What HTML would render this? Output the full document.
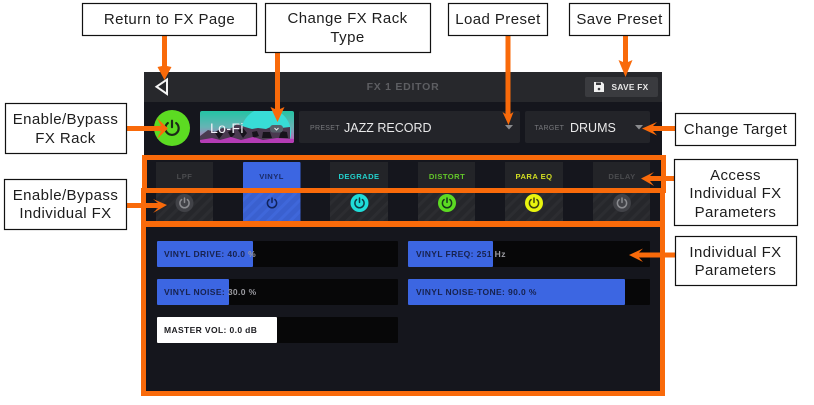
<!DOCTYPE html>
<html>
<head>
<meta charset="utf-8">
<style>
html,body{margin:0;padding:0;width:814px;height:405px;background:#fff;overflow:hidden}
svg{display:block}
.l{font-family:"Liberation Sans",sans-serif;font-size:15px;fill:#1d1d1d;text-anchor:middle;letter-spacing:.42px}
.u{font-family:"Liberation Sans",sans-serif}
.b{fill:#fff;stroke:#111;stroke-width:1.2}
.o{fill:#f96a0a}
.s{font-family:"Liberation Sans",sans-serif;font-size:8.5px;letter-spacing:.38px;font-weight:700}
.tab{font-family:"Liberation Sans",sans-serif;font-size:7.6px;letter-spacing:.45px;text-anchor:middle;font-weight:700}
</style>
</head>
<body>
<svg width="814" height="405" viewBox="0 0 814 405" xmlns="http://www.w3.org/2000/svg">
<defs>
<pattern id="h" width="8" height="8" patternUnits="userSpaceOnUse" patternTransform="rotate(45)">
<rect width="8" height="8" fill="#26272b"/><rect width="3" height="8" fill="#2c2d31"/>
</pattern>
<pattern id="hb" width="8" height="8" patternUnits="userSpaceOnUse" patternTransform="rotate(45)">
<rect width="8" height="8" fill="#3a60cf"/><rect width="3" height="8" fill="#3f67da"/>
</pattern>
<linearGradient id="sky" x1="0" y1="0" x2="0" y2="1">
<stop offset="0" stop-color="#24c4a4"/><stop offset=".5" stop-color="#66b4b4"/><stop offset=".8" stop-color="#a87cb8"/><stop offset="1" stop-color="#c05cc0"/>
</linearGradient>
<clipPath id="lf"><rect x="200" y="111" width="94" height="32" rx="2"/></clipPath>
<g id="pw" fill="none" stroke-linecap="round">
<path d="M-2.9-3.4A4.6 4.6 0 1 0 2.9-3.4" stroke-width="1.5"/>
<path d="M0-5V-.6" stroke-width="1.5"/>
</g>
</defs>

<!-- panel -->
<rect x="144" y="72" width="518" height="320" fill="#15161d"/>
<rect x="144" y="72" width="518" height="30" fill="#27282c"/>
<path d="M167 79.500V94L156.500 86.700Z" fill="none" stroke="#f4f4f4" stroke-width="2"/>
<text x="403" y="90" class="u" style="font-size:10.5px;font-weight:700;letter-spacing:.75px" fill="#5d5e62" text-anchor="middle">FX 1 EDITOR</text>
<rect x="585" y="77" width="73" height="20" rx="2" fill="#3a3b3f"/>
<path d="M594 82h8l2 2v8h-10z" fill="#f1f1f1"/><rect x="596" y="82.500" width="5" height="2.500" fill="#3a3b3f"/><circle cx="599" cy="89" r="1.300" fill="#3a3b3f"/>
<text x="611.500" y="90" class="u" style="font-size:8.3px;font-weight:700;letter-spacing:.3px" fill="#e8e8e8">SAVE FX</text>

<circle cx="172" cy="128" r="18" fill="#5cdb22"/>
<g transform="translate(172 128) scale(1.45)" stroke="#1b2a18"><use href="#pw"/></g>

<!-- Lo-Fi -->
<g clip-path="url(#lf)">
<rect x="200" y="111" width="94" height="32" fill="url(#sky)"/>
<circle cx="266" cy="133" r="25" fill="#38dcd6"/>
<path d="M200 136l8-6 7 2 7-4 8 1 7-5 8 3 7 2 6-1 8 1 7-3 8 2 9-1v16h-94z" fill="#4a3a50"/>
<path d="M215 133l4-3 4 4-4 5zM228 132l4-2 3 4-4 4zM238 130l5-2 4 5-4 5zM252 132l5-1 2 5-6 2zM263 132h7l2 6h-10zM281 131l6 1 1 6h-9z" fill="#17131b"/>
<path d="M200 140l12-2 8 2 11-3 10 3 12-3 10 3 14-2 17 1v7h-94z" fill="#b53cb5"/>
</g>
<text x="210" y="133" class="u" style="font-size:14px;letter-spacing:.4px" fill="#f0f0f6">Lo-Fi</text>
<rect x="270" y="125" width="13" height="7.500" rx="3" fill="#57606a"/>
<path d="M274.500 128l2 2 2-2" fill="none" stroke="#eee" stroke-width="1"/>

<!-- preset/target -->
<rect x="299" y="111" width="221" height="32" rx="2" fill="#232429"/>
<text x="310" y="130" class="u" style="font-size:7px;letter-spacing:.3px" fill="#77787c">PRESET</text>
<text x="344" y="132" class="u" style="font-size:12.5px;letter-spacing:0" fill="#e9e9ea">JAZZ RECORD</text>
<path d="M505 125h8l-4 4.500z" fill="#8a8b8e"/>
<rect x="525" y="111" width="125" height="32" rx="2" fill="#232429"/>
<text x="534.500" y="130" class="u" style="font-size:7px;letter-spacing:.3px" fill="#77787c">TARGET</text>
<text x="570" y="132" class="u" style="font-size:12.5px;letter-spacing:0" fill="#e9e9ea">DRUMS</text>
<path d="M635 125h8l-4 4.500z" fill="#8a8b8e"/>

<!-- tabs -->
<rect x="156" y="162" width="57" height="29" fill="#232428"/><rect x="156" y="191" width="57" height="30" fill="url(#h)"/>
<rect x="243" y="162" width="57.500" height="59" rx="1" fill="#3c66e2"/><rect x="243" y="191" width="57.500" height="30" fill="url(#hb)"/>
<rect x="330" y="162" width="58" height="29" fill="#232428"/><rect x="330" y="191" width="58" height="30" fill="url(#h)"/>
<rect x="418" y="162" width="57" height="29" fill="#232428"/><rect x="418" y="191" width="57" height="30" fill="url(#h)"/>
<rect x="505" y="162" width="58" height="29" fill="#232428"/><rect x="505" y="191" width="58" height="30" fill="url(#h)"/>
<rect x="593" y="162" width="57" height="29" fill="#232428"/><rect x="593" y="191" width="57" height="30" fill="url(#h)"/>
<text x="184.500" y="179" class="tab" fill="#4a4b4e">LPF</text>
<text x="271.500" y="179" class="tab" fill="#1a2a66">VINYL</text>
<text x="359" y="179" class="tab" fill="#23d0cb">DEGRADE</text>
<text x="447" y="179" class="tab" fill="#63c72a">DISTORT</text>
<text x="534" y="179" class="tab" fill="#d3de22">PARA EQ</text>
<text x="622" y="179" class="tab" fill="#4a4b4e">DELAY</text>
<circle cx="184.500" cy="203" r="9" fill="#414247"/><use href="#pw" x="184.500" y="203" stroke="#8b8c90"/>
<use href="#pw" x="272" y="203" stroke="#10235c"/>
<circle cx="359.500" cy="203" r="9" fill="#1fdcd8"/><use href="#pw" x="359.500" y="203" stroke="#0e3b44"/>
<circle cx="447" cy="203" r="9" fill="#5cdb22"/><use href="#pw" x="447" y="203" stroke="#15381a"/>
<circle cx="534" cy="203" r="9" fill="#e9f50e"/><use href="#pw" x="534" y="203" stroke="#3c4010"/>
<circle cx="622" cy="203" r="9" fill="#414247"/><use href="#pw" x="622" y="203" stroke="#8b8c90"/>

<!-- sliders -->
<rect x="157" y="241" width="241" height="26" rx="1" fill="#070708"/>
<rect x="157" y="241" width="96" height="26" rx="1" fill="#3c66e2"/>
<text x="164" y="257" class="s" fill="#17224e">VINYL DRIVE: 40.0 <tspan fill="#9a9aa0">%</tspan></text>
<rect x="157" y="279" width="241" height="26" rx="1" fill="#070708"/>
<rect x="157" y="279" width="72" height="26" rx="1" fill="#3c66e2"/>
<text x="164" y="295" class="s" fill="#17224e">VINYL NOISE: <tspan fill="#9a9aa0">30.0 %</tspan></text>
<rect x="157" y="317" width="241" height="26" rx="1" fill="#070708"/>
<rect x="157" y="317" width="120" height="26" rx="1" fill="#fff"/>
<text x="164" y="333" class="s" fill="#1c1c20">MASTER VOL: 0.0 dB</text>
<rect x="408" y="241" width="242" height="26" rx="1" fill="#070708"/>
<rect x="408" y="241" width="85" height="26" rx="1" fill="#3c66e2"/>
<text x="416" y="257" class="s" fill="#17224e">VINYL FREQ: 251 <tspan fill="#9a9aa0">Hz</tspan></text>
<rect x="408" y="279" width="242" height="26" rx="1" fill="#070708"/>
<rect x="408" y="279" width="217" height="26" rx="1" fill="#3c66e2"/>
<text x="416" y="295" class="s" fill="#17224e">VINYL NOISE-TONE: 90.0 %</text>

<!-- orange frames -->
<path class="o" fill-rule="evenodd" d="M142 155H666V193H142ZM147 160V188H661V160Z"/>
<path class="o" fill-rule="evenodd" d="M141 188H665V227H141ZM146 193V221H660V193Z"/>
<path class="o" fill-rule="evenodd" d="M141 221H665V396H141ZM146 227V391H660V227Z"/>

<!-- arrows -->
<path class="o" d="M162 36h5v30l4.500 1-7 13-7-13 4.500-1z"/>
<path class="o" d="M275 53h5v56l4.500-2-7 15-7-15 4.500 2z"/>
<path class="o" d="M505.500 36h5v78l3-2-5 13-6-13 3 2z"/>
<path class="o" d="M623 36h5v26l4.500-2-7 17-7-17 4.500 2z"/>
<path class="o" d="M127 126h34l-4-8 11 10.500-11 10.500 4-8h-34z"/>
<path class="o" d="M127 203h31l-5-4 14 6-14 8 5-5h-31z"/>
<path class="o" d="M675 126h-22l4-4-15 6.500 15 7-4-4.500h22z"/>
<path class="o" d="M674 176h-24l4-4-13 6.500 13 7.500-4-5h24z"/>
<path class="o" d="M675 252.500h-36l4-4-14 6.500 14 7-4-4.500h36z"/>

<!-- callouts -->
<rect class="b" x="82.500" y="3.500" width="174" height="32"/>
<text class="l" x="169.500" y="24">Return to FX Page</text>
<rect class="b" x="265.500" y="3.500" width="165" height="49"/>
<text class="l" x="347.500" y="23">Change FX Rack</text><text class="l" x="347.500" y="42">Type</text>
<rect class="b" x="448.500" y="3.500" width="99" height="32"/>
<text class="l" x="498" y="24">Load Preset</text>
<rect class="b" x="569.500" y="3.500" width="100" height="32"/>
<text class="l" x="619.500" y="24">Save Preset</text>
<rect class="b" x="5.500" y="103.500" width="121" height="50"/>
<text class="l" x="65.500" y="124">Enable/Bypass</text><text class="l" x="65.500" y="143">FX Rack</text>
<rect class="b" x="4.500" y="179.500" width="122" height="50"/>
<text class="l" x="65.500" y="200">Enable/Bypass</text><text class="l" x="65.500" y="218">Individual FX</text>
<rect class="b" x="675.500" y="113.500" width="120" height="32"/>
<text class="l" x="735.500" y="134">Change Target</text>
<rect class="b" x="674.500" y="159.500" width="123" height="66"/>
<text class="l" x="735.500" y="180">Access</text><text class="l" x="735.500" y="198">Individual FX</text><text class="l" x="735.500" y="217">Parameters</text>
<rect class="b" x="675.500" y="236.500" width="121" height="49"/>
<text class="l" x="735.500" y="257">Individual FX</text><text class="l" x="735.500" y="275">Parameters</text>
</svg>
</body>
</html>
